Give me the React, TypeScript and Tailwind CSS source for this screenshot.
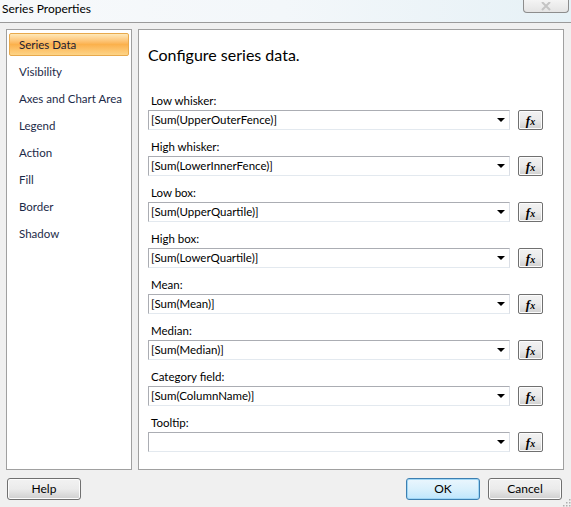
import React from "react";

const fields: { label: string; value: string }[] = [
  { label: "Low whisker:", value: "[Sum(UpperOuterFence)]" },
  { label: "High whisker:", value: "[Sum(LowerInnerFence)]" },
  { label: "Low box:", value: "[Sum(UpperQuartile)]" },
  { label: "High box:", value: "[Sum(LowerQuartile)]" },
  { label: "Mean:", value: "[Sum(Mean)]" },
  { label: "Median:", value: "[Sum(Median)]" },
  { label: "Category field:", value: "[Sum(ColumnName)]" },
  { label: "Tooltip:", value: "" },
];

const nav = ["Series Data", "Visibility", "Axes and Chart Area", "Legend", "Action", "Fill", "Border", "Shadow"];

function FxButton() {
  return (
    <div className="w-[25px] h-[20px] rounded-[2px] border border-[#707070] bg-gradient-to-b from-[#f2f2f2] via-[#ebebeb] to-[#cfcfcf] flex items-center justify-center shadow-[inset_0_0_0_1px_#fcfcfc]">
      <span
        className="text-[13px] leading-none font-bold italic text-black"
        style={{ fontFamily: '"Liberation Serif", "DejaVu Serif", serif' }}
      >
        f<span className="text-[10px]">x</span>
      </span>
    </div>
  );
}

function Button({ label, focused }: { label: string; focused?: boolean }) {
  return (
    <div
      className={
        "w-[74px] h-[22px] rounded-[3px] border flex items-center justify-center text-[12px] text-black " +
        (focused
          ? "border-[#3c7fb1] bg-gradient-to-b from-[#eaf6fd] via-[#d9f0fc] to-[#bee6fd] shadow-[inset_0_0_0_1px_#9fd6f5]"
          : "border-[#707070] bg-gradient-to-b from-[#f2f2f2] via-[#ebebeb] to-[#cfcfcf] shadow-[inset_0_0_0_1px_#fcfcfc]")
      }
    >
      {label}
    </div>
  );
}

export default function App() {
  return (
    <div
      className="w-[571px] h-[507px] bg-[#f0f0f0] flex flex-col relative overflow-hidden"
      style={{ fontFamily: 'Lato, "Noto Sans", sans-serif' }}
    >
      {/* Title bar */}
      <div className="h-[23px] shrink-0 bg-gradient-to-r from-[#f7f9fb] via-[#f3f7fa] to-[#e6f1f6] border-b border-[#9a9a9a] flex items-center pl-[2px]">
        <span className="text-[12px] text-black leading-none -mt-[5px]">Series Properties</span>
      </div>
      {/* close button */}
      <div className="absolute top-0 left-[523px] w-[46px] h-[13px] rounded-b-[4px] border border-t-0 border-[#8d8d8d] bg-gradient-to-b from-[#f4f4f4] to-[#e4e4e4] flex items-center justify-center">
        <svg width="12" height="9" viewBox="0 0 12 9">
          <path d="M2 0 L10 8 M10 0 L2 8" stroke="#c4c4c4" strokeWidth="2" fill="none" />
        </svg>
      </div>

      {/* Body */}
      <div className="flex gap-[6px] pl-[6px] pt-[6px] h-[447px] shrink-0">
        <div className="w-[126px] h-full bg-white border border-[#a0a0a0] pt-[1px] px-[2px]">
          {nav.map((n, i) =>
            i === 0 ? (
              <div key={n} className="h-[27px] flex items-center">
                <div className="w-full h-[23px] rounded-[2px] border border-[#e8a94c] bg-gradient-to-b from-[#fee8b8] via-[#fbb14c] to-[#fdd486] flex items-center pl-[9px] text-[11.5px] text-[#1c2033] whitespace-nowrap">
                  {n}
                </div>
              </div>
            ) : (
              <div key={n} className="h-[27px] flex items-center pl-[10px] text-[11.5px] text-[#1c2a48] whitespace-nowrap">
                {n}
              </div>
            )
          )}
        </div>
        <div className="w-[426px] h-full bg-white border border-[#a0a0a0] pl-[9px] pt-[15px]">
          <div className="text-[16px] leading-[20px] text-black">Configure series data.</div>
          <div className="mt-[28px] flex flex-col">
            {fields.map((f) => (
              <div key={f.label} className="h-[46px]">
                <div className="h-[16px] leading-[16px] text-[11.5px] text-black pl-[3px]">{f.label}</div>
                <div className="mt-[1px] flex items-center gap-[8px]">
                  <div className="w-[362px] h-[20px] border border-[#abadb3] border-b-[#e3e9ef] border-r-[#dbdfe6] flex items-center justify-between pl-[2px] pr-[3px] text-[11.5px] text-black bg-white">
                    <span className="leading-none">{f.value}</span>
                    <span className="w-0 h-0 border-l-[4px] border-r-[4px] border-t-[4px] border-l-transparent border-r-transparent border-t-black mr-[1px]" />
                  </div>
                  <FxButton />
                </div>
              </div>
            ))}
          </div>
        </div>
      </div>

      {/* Footer */}
      <div className="flex items-center pl-[7px] pr-[9px] mt-[8px]">
        <Button label="Help" />
        <div className="flex-1" />
        <Button label="OK" focused />
        <div className="w-[8px]" />
        <Button label="Cancel" />
      </div>

      {/* resize grip */}
      <svg className="absolute right-0 bottom-0" width="10" height="10" viewBox="0 0 10 10">
        {[
          [8, 2],
          [8, 5],
          [5, 5],
          [8, 8],
          [5, 8],
          [2, 8],
        ].map(([x, y], i) => (
          <rect key={i} x={x} y={y} width="1.5" height="1.5" fill="#b0b0b0" />
        ))}
      </svg>
    </div>
  );
}
